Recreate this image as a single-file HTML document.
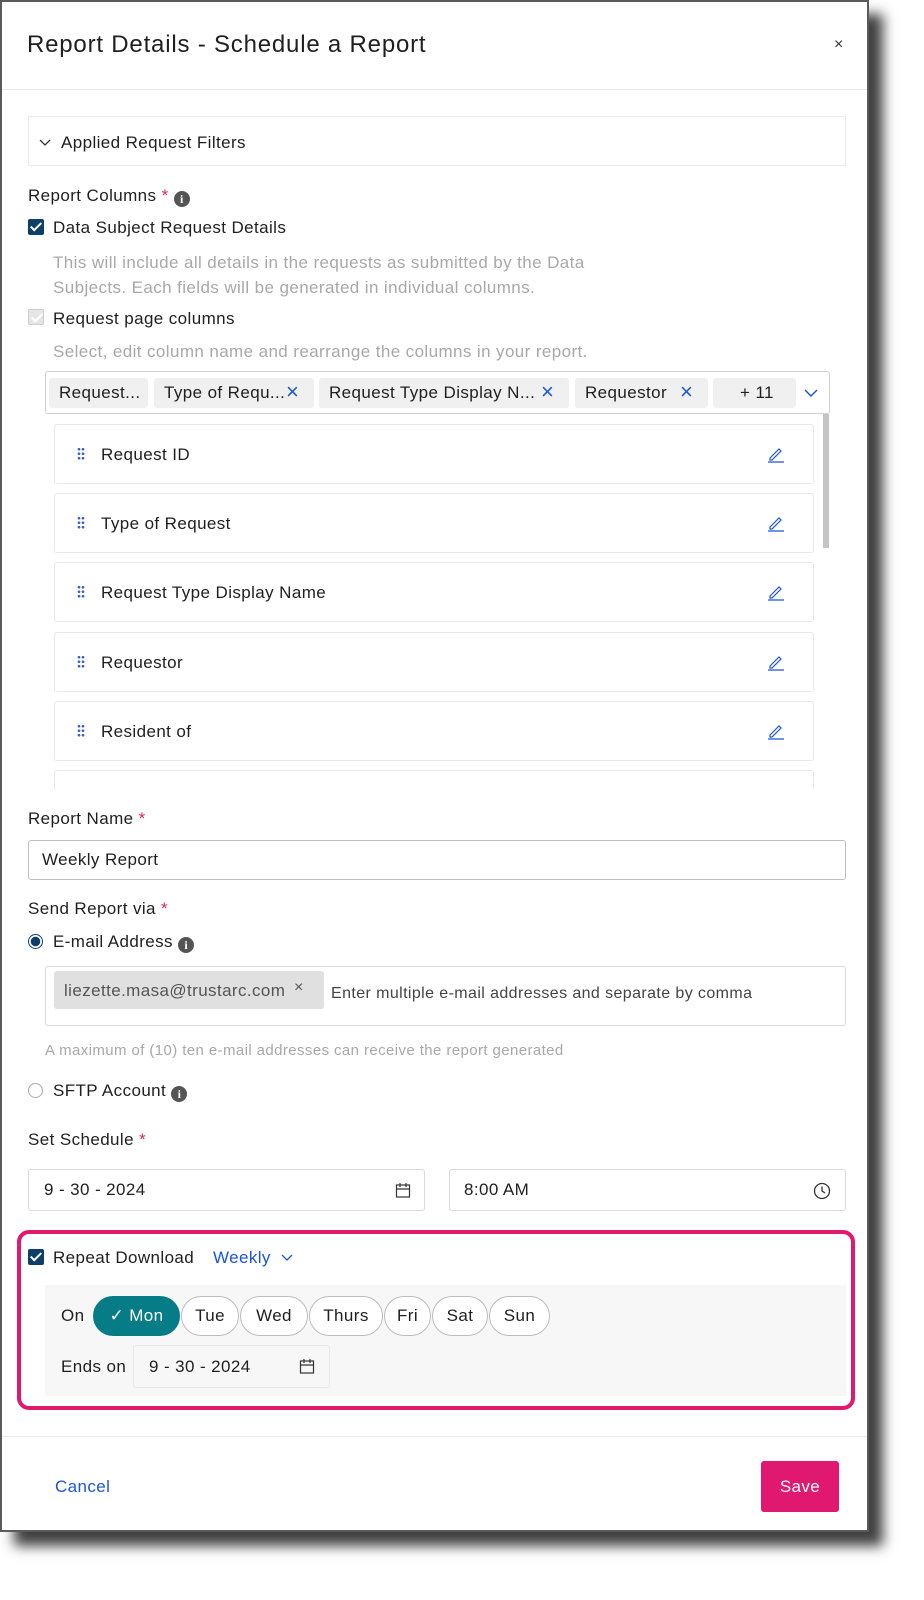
<!DOCTYPE html>
<html><head><meta charset="utf-8"><style>
*{box-sizing:border-box;margin:0;padding:0}
body{width:924px;height:1600px;background:#fff;font-family:"Liberation Sans",sans-serif;color:#1f1f1f;position:relative;overflow:hidden;letter-spacing:0.4px}
.modal{position:absolute;left:0;top:0;width:869px;height:1532px;background:#fff;border:2px solid #5a5a5a;box-shadow:14px 14px 12px rgba(0,0,0,.75)}
.a{position:absolute;white-space:nowrap}
.t16{font-size:17px}
.gray{color:#a8a8a8}
.req{color:#e0245e}
.info{display:inline-block;width:16px;height:16px;border-radius:50%;background:#555;color:#fff;font-size:12px;font-weight:bold;text-align:center;line-height:16px;font-family:"Liberation Serif",serif;vertical-align:-2px;letter-spacing:0}
.cb{position:absolute;width:16px;height:16px;border-radius:2px;background:#0f3e6b}
.cb:after{content:"";position:absolute;left:5px;top:1px;width:4px;height:9px;border:solid #fff;border-width:0 2px 2px 0;transform:rotate(45deg)}
.chip{position:absolute;top:376px;height:30px;background:#f0f0f0;border-radius:3px;font-size:17px;line-height:30px;padding-left:10px}
.x{color:#1a56d6;font-size:22px;position:absolute;top:-1px}
.row{position:absolute;left:52px;width:760px;height:60px;border:1px solid #e8e8e8;border-radius:3px;background:#fff}
.row .d{position:absolute;left:22px;top:22px;width:8px;height:14px;background:radial-gradient(circle,#3a63c9 1.2px,transparent 1.5px) 0 0/4px 4.5px}
.row .l{position:absolute;left:46px;top:20px;font-size:17px}
.pen{position:absolute;left:712px;top:20px}
.inp{position:absolute;border:1px solid #d9d9d9;border-radius:3px;background:#fff}
.day{position:absolute;top:1294px;height:40px;border:1px solid #bdbdbd;border-radius:20px;background:#fff;font-size:17px;line-height:38px;text-align:center}
</style></head><body>
<div class="modal">
<div class="a" style="left:25px;top:29px;font-size:24px;letter-spacing:0.8px">Report Details - Schedule a Report</div>
<div class="a" style="left:832px;top:34px;font-size:16px;color:#333">×</div>
<div class="a" style="left:0;top:87px;width:865px;height:1px;background:#ececec"></div>
<div class="a" style="left:26px;top:114px;width:818px;height:50px;border:1px solid #ececec"></div>
<svg class="a" style="left:37px;top:137px" width="12" height="8"><path d="M1 1l5 5 5-5" stroke="#333" fill="none" stroke-width="1.3"/></svg>
<div class="a t16" style="left:59px;top:131px">Applied Request Filters</div>
<div class="a t16" style="left:26px;top:184px">Report Columns <span class="req">*</span> <span class="info">i</span></div>
<div class="cb" style="left:26px;top:217px"></div>
<div class="a t16" style="left:51px;top:216px">Data Subject Request Details</div>
<div class="a t16 gray" style="left:51px;top:248px;line-height:25px">This will include all details in the requests as submitted by the Data<br>Subjects. Each fields will be generated in individual columns.</div>
<div class="cb" style="left:26px;top:307px;background:#e6e6e6;border:1px solid #cfcfcf"></div>
<div class="a t16" style="left:51px;top:307px">Request page columns</div>
<div class="a t16 gray" style="left:51px;top:340px">Select, edit column name and rearrange the columns in your report.</div>
<div class="a" style="left:43px;top:369px;width:785px;height:43px;border:1px solid #d0d0d0;border-radius:3px"></div>
<div class="chip" style="left:47px;width:99px">Request...</div>
<div class="chip" style="left:152px;width:160px">Type of Requ... <span class="x" style="left:132px">×</span></div>
<div class="chip" style="left:317px;width:250px">Request Type Display N... <span class="x" style="left:222px">×</span></div>
<div class="chip" style="left:573px;width:133px">Requestor <span class="x" style="left:105px">×</span></div>
<div class="chip" style="left:711px;width:83px;padding-left:27px">+ 11</div>
<svg class="a" style="left:802px;top:387px" width="14" height="9"><path d="M1 1l6 6 6-6" stroke="#1a56d6" fill="none" stroke-width="1.5"/></svg>
<div class="a" style="left:821px;top:412px;width:6px;height:134px;background:#c4c4c4"></div>
<div class="row" style="top:422px"><div class="d"></div><div class="l">Request ID</div><svg class="pen" width="18" height="18"><path d="M3 13l9-9 2 2-9 9H3z M1 17h16" stroke="#1a56d6" fill="none" stroke-width="1.2"/></svg></div>
<div class="row" style="top:491px"><div class="d"></div><div class="l">Type of Request</div><svg class="pen" width="18" height="18"><path d="M3 13l9-9 2 2-9 9H3z M1 17h16" stroke="#1a56d6" fill="none" stroke-width="1.2"/></svg></div>
<div class="row" style="top:560px"><div class="d"></div><div class="l">Request Type Display Name</div><svg class="pen" width="18" height="18"><path d="M3 13l9-9 2 2-9 9H3z M1 17h16" stroke="#1a56d6" fill="none" stroke-width="1.2"/></svg></div>
<div class="row" style="top:630px"><div class="d"></div><div class="l">Requestor</div><svg class="pen" width="18" height="18"><path d="M3 13l9-9 2 2-9 9H3z M1 17h16" stroke="#1a56d6" fill="none" stroke-width="1.2"/></svg></div>
<div class="row" style="top:699px"><div class="d"></div><div class="l">Resident of</div><svg class="pen" width="18" height="18"><path d="M3 13l9-9 2 2-9 9H3z M1 17h16" stroke="#1a56d6" fill="none" stroke-width="1.2"/></svg></div>
<div class="row" style="top:768px;height:20px;border-bottom:none"></div>
<div class="a t16" style="left:26px;top:807px">Report Name <span class="req">*</span></div>
<div class="inp" style="left:26px;top:838px;width:818px;height:40px;border-color:#bfbfbf"></div>
<div class="a t16" style="left:40px;top:848px">Weekly Report</div>
<div class="a t16" style="left:26px;top:897px">Send Report via <span class="req">*</span></div>
<div class="a" style="left:26px;top:932px;width:15px;height:15px;border-radius:50%;border:1px solid #0f3e6b;background:radial-gradient(circle,#0f3e6b 4.5px,#fff 5px)"></div>
<div class="a t16" style="left:51px;top:930px">E-mail Address <span class="info">i</span></div>
<div class="inp" style="left:43px;top:964px;width:801px;height:60px"></div>
<div class="a" style="left:52px;top:969px;width:270px;height:38px;background:#e0e0e0;border-radius:3px"></div>
<div class="a t16" style="left:62px;top:979px;color:#555">liezette.masa@trustarc.com</div>
<div class="a" style="left:292px;top:977px;font-size:16px;color:#555">×</div>
<div class="a" style="left:329px;top:983px;font-size:16px;color:#444;width:425px;overflow:hidden">Enter multiple e-mail addresses and separate by comma</div>
<div class="a gray" style="left:43px;top:1040px;font-size:15px">A maximum of (10) ten e-mail addresses can receive the report generated</div>
<div class="a" style="left:26px;top:1081px;width:15px;height:15px;border-radius:50%;border:1px solid #aaa"></div>
<div class="a t16" style="left:51px;top:1079px">SFTP Account <span class="info">i</span></div>
<div class="a t16" style="left:26px;top:1128px">Set Schedule <span class="req">*</span></div>
<div class="inp" style="left:26px;top:1167px;width:397px;height:42px"></div>
<div class="a t16" style="left:42px;top:1178px">9 - 30 - 2024</div>
<svg class="a" style="left:393px;top:1180px" width="16" height="17"><rect x="1.5" y="3" width="13" height="12" fill="none" stroke="#333" stroke-width="1.2"/><path d="M1.5 7h13M5 1v4M11 1v4" stroke="#333" stroke-width="1.2"/></svg>
<div class="inp" style="left:447px;top:1167px;width:397px;height:42px"></div>
<div class="a t16" style="left:462px;top:1178px">8:00 AM</div>
<svg class="a" style="left:811px;top:1180px" width="18" height="18"><circle cx="9" cy="9" r="7.5" fill="none" stroke="#333" stroke-width="1.3"/><path d="M9 4.5V9l3 2" stroke="#333" fill="none" stroke-width="1.3"/></svg>
<div class="a" style="left:15px;top:1228px;width:838px;height:180px;border:4px solid #e0186f;border-radius:12px"></div>
<div class="cb" style="left:26px;top:1247px"></div>
<div class="a t16" style="left:51px;top:1246px">Repeat Download</div>
<div class="a t16" style="left:211px;top:1246px;color:#1a56d6">Weekly</div>
<svg class="a" style="left:279px;top:1252px" width="12" height="8"><path d="M1 1l5 5 5-5" stroke="#1a56d6" fill="none" stroke-width="1.3"/></svg>
<div class="a" style="left:43px;top:1283px;width:801px;height:111px;background:#f7f7f7"></div>
<div class="a t16" style="left:59px;top:1304px">On</div>
<div class="day" style="left:91px;width:87px;background:#067c86;border-color:#067c86;color:#fff">✓ Mon</div>
<div class="day" style="left:179px;width:58px">Tue</div>
<div class="day" style="left:238px;width:68px">Wed</div>
<div class="day" style="left:307px;width:74px">Thurs</div>
<div class="day" style="left:382px;width:47px">Fri</div>
<div class="day" style="left:430px;width:56px">Sat</div>
<div class="day" style="left:487px;width:61px">Sun</div>
<div class="a t16" style="left:59px;top:1355px">Ends on</div>
<div class="a" style="left:131px;top:1343px;width:197px;height:43px;border:1px solid #e8e8e8;border-radius:3px"></div>
<div class="a t16" style="left:147px;top:1355px">9 - 30 - 2024</div>
<svg class="a" style="left:297px;top:1356px" width="16" height="17"><rect x="1.5" y="3" width="13" height="12" fill="none" stroke="#333" stroke-width="1.2"/><path d="M1.5 7h13M5 1v4M11 1v4" stroke="#333" stroke-width="1.2"/></svg>
<div class="a" style="left:0;top:1434px;width:865px;height:1px;background:#ececec"></div>
<div class="a" style="left:53px;top:1475px;font-size:17px;color:#1a56d6">Cancel</div>
<div class="a" style="left:759px;top:1459px;width:78px;height:51px;background:#e0186f;border-radius:3px;color:#fff;font-size:17px;text-align:center;line-height:51px">Save</div>
</div>
</body></html>
